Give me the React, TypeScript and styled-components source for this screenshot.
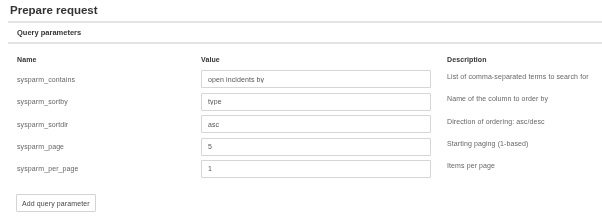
import styled, { createGlobalStyle } from 'styled-components';

const GlobalStyle = createGlobalStyle`
  body {
    margin: 0;
    background: #fff;
    font-family: "Liberation Sans", Arial, sans-serif;
    color: #555;
    -webkit-font-smoothing: antialiased;
  }
`;

const Page = styled.main`
  padding: 3px 0 0 8px;
  will-change: transform;
`;

const Title = styled.h2`
  margin: 0;
  padding: 0 0 4px 2px;
  font-size: 11.5px;
  line-height: 14px;
  font-weight: bold;
  color: #333;
  border-bottom: 2px solid #e4e4e4;
`;

const SectionHead = styled.div`
  padding: 5px 0 4px 9px;
  font-size: 7.5px;
  line-height: 10px;
  font-weight: bold;
  color: #333;
  border-bottom: 2px solid #e4e4e4;
`;

const Table = styled.div`
  display: grid;
  grid-template-columns: 184px 230px 1fr;
  row-gap: 4.4px;
  padding: 11px 0 0 9px;
  align-items: center;
`;

const Head = styled.div<{ $desc?: boolean }>`
  font-size: 7px;
  letter-spacing: 0.1px;
  font-weight: bold;
  color: #333;
  line-height: 10px;
  padding-left: ${(p) => (p.$desc ? '16px' : '0')};
  margin-bottom: 1px;
`;

const Cell = styled.div<{ $desc?: boolean }>`
  font-size: 7px;
  letter-spacing: 0.1px;
  line-height: 10px;
  color: #666;
  padding-left: ${(p) => (p.$desc ? '16px' : '0')};
  margin-top: ${(p) => (p.$desc ? '-5px' : '1px')};
`;

const Input = styled.input`
  box-sizing: border-box;
  width: 230px;
  height: 18px;
  margin: 0;
  padding: 0 6px;
  border: 1px solid #d6d6d6;
  border-radius: 1px;
  font-family: inherit;
  font-size: 7px;
  letter-spacing: 0.1px;
  color: #555;
  background: #fff;
`;

const Footer = styled.div`
  padding: 14px 0 0 8px;
`;

const Button = styled.button`
  height: 18px;
  padding: 0 5px;
  border: 1px solid #d4d4d4;
  border-radius: 1px;
  background: #fff;
  font-family: inherit;
  font-size: 7px;
  letter-spacing: 0.1px;
  color: #444;
`;

const params = [
  { name: 'sysparm_contains', value: 'open incidents by', desc: 'List of comma-separated terms to search for' },
  { name: 'sysparm_sortby', value: 'type', desc: 'Name of the column to order by' },
  { name: 'sysparm_sortdir', value: 'asc', desc: 'Direction of ordering: asc/desc' },
  { name: 'sysparm_page', value: '5', desc: 'Starting paging (1-based)' },
  { name: 'sysparm_per_page', value: '1', desc: 'Items per page' },
];

export default function App() {
  return (
    <>
      <GlobalStyle />
      <Page>
        <Title>Prepare request</Title>
        <SectionHead>Query parameters</SectionHead>
        <Table>
          <Head>Name</Head>
          <Head>Value</Head>
          <Head $desc>Description</Head>
          {params.map((p) => (
            <>
              <Cell key={p.name + 'n'}>{p.name}</Cell>
              <Input key={p.name + 'v'} defaultValue={p.value} />
              <Cell key={p.name + 'd'} $desc>{p.desc}</Cell>
            </>
          ))}
        </Table>
        <Footer>
          <Button>Add query parameter</Button>
        </Footer>
      </Page>
    </>
  );
}
